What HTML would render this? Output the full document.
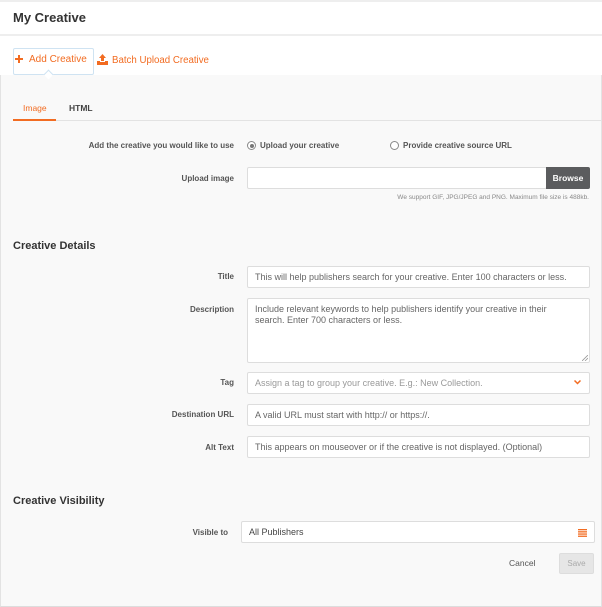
<!DOCTYPE html>
<html><head><meta charset="utf-8"><style>
*{box-sizing:border-box;margin:0;padding:0}
body{width:602px;height:607px;position:relative;overflow:hidden;background:#fff;font-family:"Liberation Sans",sans-serif;color:#444}
.a{position:absolute}
.lbl{position:absolute;right:368px;font-size:8px;font-weight:bold;color:#555;text-align:right;white-space:nowrap}
.in{position:absolute;background:#fff;border:1px solid #ddd;border-radius:2px;font-size:9px;color:#666;padding:0 7px;white-space:nowrap}
</style></head><body>
<div class="a" style="left:0;top:0;width:602px;height:2px;background:#eee"></div>
<div class="a" style="left:13px;top:10px;font-size:13px;font-weight:bold;color:#333">My Creative</div>
<div class="a" style="left:0;top:34px;width:602px;height:2px;background:#eee"></div>
<div class="a" style="left:0;top:75px;width:602px;height:532px;background:#f9f9f9;border-left:1px solid #e3e3e3;border-right:1px solid #e3e3e3;border-bottom:1px solid #ddd"></div>
<div class="a" style="left:13px;top:48px;width:81px;height:27px;border:1px solid #cfe3f2;border-radius:2px;background:#fff"></div>
<div class="a" style="left:45px;top:71px;width:7px;height:7px;background:#fff;border-left:1px solid #cfe3f2;border-top:1px solid #cfe3f2;transform:rotate(45deg)"></div>
<svg class="a" style="left:15px;top:55px" width="8" height="8"><path d="M4 0v8M0 4h8" stroke="#f26c22" stroke-width="2"/></svg>
<div class="a" style="left:29px;top:54px;font-size:10px;color:#f26c22">Add Creative</div>
<svg class="a" style="left:97px;top:54px" width="11" height="11" viewBox="0 0 11 11"><path d="M5.5 0L2 4h2v3h3V4h2z" fill="#f26c22"/><path d="M0 7h3v1h5V7h3v4H0z" fill="#f26c22"/></svg>
<div class="a" style="left:112px;top:55px;font-size:9.7px;color:#f26c22">Batch Upload Creative</div>
<div class="a" style="left:23px;top:103px;font-size:8.5px;color:#f26c22">Image</div>
<div class="a" style="left:69px;top:103px;font-size:8.5px;color:#444;font-weight:bold">HTML</div>
<div class="a" style="left:13px;top:120px;width:589px;height:1px;background:#e3e3e3"></div>
<div class="a" style="left:13px;top:119px;width:43px;height:2px;background:#f26c22"></div>
<div class="lbl" style="top:141px">Add the creative you would like to use</div>
<div class="a" style="left:247px;top:141px;width:9px;height:9px;border:1px solid #888;border-radius:50%;background:#fff"></div>
<div class="a" style="left:249.5px;top:143.5px;width:4px;height:4px;border-radius:50%;background:#777"></div>
<div class="a" style="left:260px;top:141px;font-size:8px;font-weight:bold;color:#555">Upload your creative</div>
<div class="a" style="left:390px;top:141px;width:9px;height:9px;border:1px solid #888;border-radius:50%;background:#fff"></div>
<div class="a" style="left:403px;top:141px;font-size:8px;font-weight:bold;color:#555">Provide creative source URL</div>
<div class="lbl" style="top:174px">Upload image</div>
<div class="in" style="left:247px;top:167px;width:300px;height:22px"></div>
<div class="a" style="left:546px;top:167px;width:44px;height:22px;background:#5b5c5e;color:#fff;font-size:8.5px;font-weight:bold;text-align:center;line-height:22px;border-radius:0 2px 2px 0">Browse</div>
<div class="a" style="right:13px;top:194px;font-size:6.5px;color:#888">We support GIF, JPG/JPEG and PNG. Maximum file size is 488kb.</div>
<div class="a" style="left:13px;top:240px;font-size:11px;font-weight:bold;color:#333">Creative Details</div>
<div class="lbl" style="top:272px">Title</div>
<div class="in" style="left:247px;top:266px;width:343px;height:22px;line-height:20px">This will help publishers search for your creative. Enter 100 characters or less.</div>
<div class="lbl" style="top:305px">Description</div>
<div class="in" style="left:247px;top:298px;width:343px;height:65px;padding-top:5px;padding-right:20px;line-height:11px;white-space:normal">Include relevant keywords to help publishers identify your creative in their search. Enter 700 characters or less.</div>
<svg class="a" style="left:582px;top:355px" width="6" height="6"><path d="M0 6L6 0M3 6L6 3" stroke="#999" stroke-width="0.8"/></svg>
<div class="lbl" style="top:378px">Tag</div>
<div class="in" style="left:247px;top:372px;width:343px;height:22px;line-height:20px;color:#999">Assign a tag to group your creative. E.g.: New Collection.</div>
<svg class="a" style="left:574px;top:380px" width="7" height="5"><path d="M0.5 0.5L3.5 3.5L6.5 0.5" stroke="#f26c22" stroke-width="1.5" fill="none"/></svg>
<div class="lbl" style="top:410px">Destination URL</div>
<div class="in" style="left:247px;top:404px;width:343px;height:22px;line-height:20px">A valid URL must start with http:// or https://.</div>
<div class="lbl" style="top:443px">Alt Text</div>
<div class="in" style="left:247px;top:436px;width:343px;height:22px;line-height:20px">This appears on mouseover or if the creative is not displayed. (Optional)</div>
<div class="a" style="left:13px;top:495px;font-size:11px;font-weight:bold;color:#333">Creative Visibility</div>
<div class="lbl" style="top:528px;right:374px">Visible to</div>
<div class="in" style="left:241px;top:521px;width:354px;height:22px;line-height:20px;color:#444">All Publishers</div>
<svg class="a" style="left:578px;top:529px" width="9" height="8"><rect x="0" y="0" width="9" height="1.3" fill="#f26c22"/><rect x="0" y="2.2" width="9" height="1.3" fill="#f26c22"/><rect x="0" y="4.4" width="9" height="1.3" fill="#f26c22"/><rect x="0" y="6.6" width="9" height="1.3" fill="#f26c22"/></svg>
<div class="a" style="left:509px;top:558px;font-size:8.5px;color:#555">Cancel</div>
<div class="a" style="left:559px;top:553px;width:35px;height:21px;background:#e6e6e6;border:1px solid #ddd;border-radius:2px;color:#aaa;font-size:8px;text-align:center;line-height:19px">Save</div>
</body></html>
